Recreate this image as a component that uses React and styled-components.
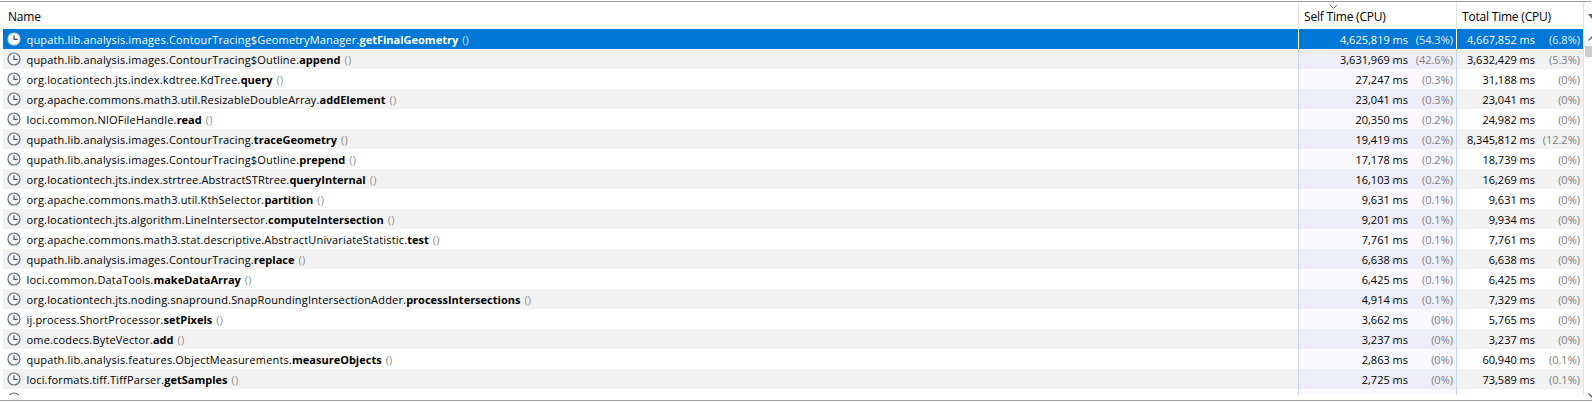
import React from "react";
import styled, { createGlobalStyle } from "styled-components";

const rows = [
  ["qupath.lib.analysis.images.ContourTracing$GeometryManager.", "getFinalGeometry", "4,625,819 ms", "(54.3%)", "4,667,852 ms", "(6.8%)"],
  ["qupath.lib.analysis.images.ContourTracing$Outline.", "append", "3,631,969 ms", "(42.6%)", "3,632,429 ms", "(5.3%)"],
  ["org.locationtech.jts.index.kdtree.KdTree.", "query", "27,247 ms", "(0.3%)", "31,188 ms", "(0%)"],
  ["org.apache.commons.math3.util.ResizableDoubleArray.", "addElement", "23,041 ms", "(0.3%)", "23,041 ms", "(0%)"],
  ["loci.common.NIOFileHandle.", "read", "20,350 ms", "(0.2%)", "24,982 ms", "(0%)"],
  ["qupath.lib.analysis.images.ContourTracing.", "traceGeometry", "19,419 ms", "(0.2%)", "8,345,812 ms", "(12.2%)"],
  ["qupath.lib.analysis.images.ContourTracing$Outline.", "prepend", "17,178 ms", "(0.2%)", "18,739 ms", "(0%)"],
  ["org.locationtech.jts.index.strtree.AbstractSTRtree.", "queryInternal", "16,103 ms", "(0.2%)", "16,269 ms", "(0%)"],
  ["org.apache.commons.math3.util.KthSelector.", "partition", "9,631 ms", "(0.1%)", "9,631 ms", "(0%)"],
  ["org.locationtech.jts.algorithm.LineIntersector.", "computeIntersection", "9,201 ms", "(0.1%)", "9,934 ms", "(0%)"],
  ["org.apache.commons.math3.stat.descriptive.AbstractUnivariateStatistic.", "test", "7,761 ms", "(0.1%)", "7,761 ms", "(0%)"],
  ["qupath.lib.analysis.images.ContourTracing.", "replace", "6,638 ms", "(0.1%)", "6,638 ms", "(0%)"],
  ["loci.common.DataTools.", "makeDataArray", "6,425 ms", "(0.1%)", "6,425 ms", "(0%)"],
  ["org.locationtech.jts.noding.snapround.SnapRoundingIntersectionAdder.", "processIntersections", "4,914 ms", "(0.1%)", "7,329 ms", "(0%)"],
  ["ij.process.ShortProcessor.", "setPixels", "3,662 ms", "(0%)", "5,765 ms", "(0%)"],
  ["ome.codecs.ByteVector.", "add", "3,237 ms", "(0%)", "3,237 ms", "(0%)"],
  ["qupath.lib.analysis.features.ObjectMeasurements.", "measureObjects", "2,863 ms", "(0%)", "60,940 ms", "(0.1%)"],
  ["loci.formats.tiff.TiffParser.", "getSamples", "2,725 ms", "(0%)", "73,589 ms", "(0.1%)"],
];

const GlobalStyle = createGlobalStyle`
  html, body {
    margin: 0;
    background: #fff;
  }
`;

const Page = styled.div`
  width: 1592px;
  height: 402px;
  box-sizing: border-box;
  overflow: hidden;
  display: flex;
  flex-direction: column;
  font-family: "Open Sans", "Noto Sans", sans-serif;
  font-size: 11px;
  color: #000;
  border-top: 1px solid #fff;
`;

const TopRule = styled.div`
  height: 1px;
  margin-right: 1px;
  background: #a0a0a0;
`;

const Body = styled.div`
  flex: 0 0 393px;
  display: flex;
  padding-left: 3px;
`;

const Table = styled.div`
  width: 1580px;
  height: 393px;
  flex: none;
  display: flex;
  flex-direction: column;
  overflow: hidden;
`;

const Header = styled.div`
  flex: 0 0 27px;
  display: grid;
  grid-template-columns: 1295px 158px 127px;
`;

const HeaderCell = styled.div`
  position: relative;
  display: flex;
  align-items: center;
  padding-left: ${(p) => p.$pad}px;
  padding-top: 1px;
  font-size: 12px;
  letter-spacing: -0.2px;
  border-left: ${(p) => (p.$first ? "none" : "1px solid #e5e5e5")};
`;

const SortArrow = styled.svg`
  position: absolute;
  top: 2px;
  left: 30px;
`;

const Row = styled.div`
  flex: 0 0 20px;
  display: grid;
  grid-template-columns: 1295px 158px 127px;
  background: ${(p) => (p.$selected ? "#0078d7" : p.$alt ? "#f2f2f2" : "#fff")};
  color: ${(p) => (p.$selected ? "#fff" : "#000")};
`;

const NameCell = styled.div`
  display: flex;
  align-items: center;
  padding-left: 4px;
  white-space: nowrap;
  letter-spacing: 0.17px;
`;

const Method = styled.b`
  font-weight: 700;
  letter-spacing: 0;
`;

const Parens = styled.span`
  margin-left: 4px;
  color: ${(p) => (p.$selected ? "#cfe3f7" : "#909090")};
`;

const ClockIcon = styled.svg`
  flex: none;
  margin-right: 5.5px;
`;

const TimeCell = styled.div`
  display: flex;
  align-items: center;
  justify-content: flex-end;
  padding-right: 3px;
  background: ${(p) =>
    p.$selected ? "transparent" : p.$sorted ? (p.$alt ? "#eeeef8" : "#f9f9ff") : "transparent"};
  border-left: 1px solid ${(p) => (p.$selected ? "#fff" : "#c5d5f5")};
`;

const Time = styled.span`
  white-space: nowrap;
`;

const Percent = styled.span`
  flex: 0 0 45px;
  text-align: right;
  white-space: nowrap;
  color: ${(p) => (p.$selected ? "#e3effa" : "#808080")};
`;

const Filler = styled.div`
  flex: 1;
  display: grid;
  grid-template-columns: 1295px 158px 127px;
`;

const FillerCell = styled.div`
  border-left: ${(p) => (p.$line ? "1px solid #c5d5f5" : "none")};
  background: ${(p) => (p.$sorted ? "#f9f9ff" : "transparent")};
`;

const PartialIcon = styled.div`
  height: 6px;
  overflow: hidden;
  padding: 3px 0 0 4px;
`;

const Scrollbar = styled.div`
  position: relative;
  flex: 0 0 9px;
  height: 393px;
  background: #fff;
  border-left: 1px solid #dfe3f0;
`;

const Thumb = styled.div`
  position: absolute;
  top: 44px;
  left: 1px;
  width: 8px;
  height: 11px;
  background: #cdcdcd;
`;

const ArrowUp = styled.svg`
  position: absolute;
  top: 34px;
  left: 4px;
`;

const ArrowDown = styled.svg`
  position: absolute;
  top: 391px;
  left: 4px;
`;

const HeaderMenu = styled.svg`
  position: absolute;
  top: 12px;
  left: 4px;
`;

const BottomRule = styled.div`
  height: 1px;
  margin-top: 5px;
  background: #a0a0a0;
`;

const Clock = ({ selected }) => (
  <ClockIcon width="14" height="14" viewBox="0 0 14 14">
    <circle cx="7" cy="7" r="6" fill={selected ? "#f8f8f8" : "#f8f8fa"} stroke={selected ? "#c9d6e4" : "#607082"} strokeWidth="1.2" />
    <path d="M7 3.2V7.3H10.6" fill="none" stroke={selected ? "#3d4c5c" : "#4a5868"} strokeWidth="1.2" />
  </ClockIcon>
);

const App = () => (
  <Page>
    <GlobalStyle />
    <TopRule />
    <Body>
      <Table>
        <Header>
          <HeaderCell $pad={5} $first>Name</HeaderCell>
          <HeaderCell $pad={5}>
            <SortArrow width="9" height="5" viewBox="0 0 9 5">
              <path d="M0.5 0.5L4.5 4.5L8.5 0.5" fill="none" stroke="#8a8a8a" />
            </SortArrow>
            Self Time (CPU)
          </HeaderCell>
          <HeaderCell $pad={5}>Total Time (CPU)</HeaderCell>
        </Header>
        {rows.map((row, index) => {
          const selected = index === 0;
          const alt = index % 2 === 1;
          return (
            <Row key={index} $selected={selected} $alt={alt}>
              <NameCell>
                <Clock selected={selected} />
                {row[0]}
                <Method>{row[1]}</Method>
                <Parens $selected={selected}>()</Parens>
              </NameCell>
              <TimeCell $selected={selected} $alt={alt} $sorted>
                <Time>{row[2]}</Time>
                <Percent $selected={selected}>{row[3]}</Percent>
              </TimeCell>
              <TimeCell $selected={selected} $alt={alt}>
                <Time>{row[4]}</Time>
                <Percent $selected={selected}>{row[5]}</Percent>
              </TimeCell>
            </Row>
          );
        })}
        <Filler>
          <FillerCell>
            <PartialIcon>
              <Clock />
            </PartialIcon>
          </FillerCell>
          <FillerCell $line $sorted />
          <FillerCell $line />
        </Filler>
      </Table>
      <Scrollbar>
        <HeaderMenu width="8" height="5" viewBox="0 0 8 5">
          <path d="M0 0H8L4 5Z" fill="#606060" />
        </HeaderMenu>
        <ArrowUp width="8" height="5" viewBox="0 0 8 5">
          <path d="M0.5 4.5L4 1L7.5 4.5" fill="none" stroke="#606060" strokeWidth="1.3" />
        </ArrowUp>
        <Thumb />
        <ArrowDown width="8" height="5" viewBox="0 0 8 5">
          <path d="M0.5 0.5L4 4L7.5 0.5" fill="none" stroke="#606060" strokeWidth="1.3" />
        </ArrowDown>
      </Scrollbar>
    </Body>
    <BottomRule />
  </Page>
);

export default App;
